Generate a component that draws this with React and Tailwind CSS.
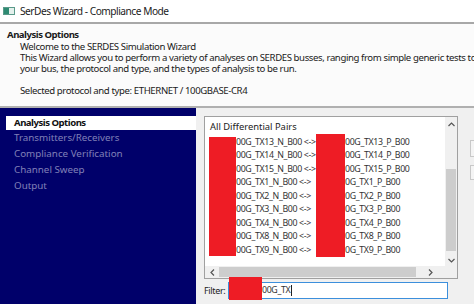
import React from "react";

const rows = [
  ["00G_TX13_N_B00 <->", "00G_TX13_P_B00"],
  ["00G_TX14_N_B00 <->", "00G_TX14_P_B00"],
  ["00G_TX15_N_B00 <->", "00G_TX15_P_B00"],
  ["00G_TX1_N_B00 <->", "0G_TX1_P_B00"],
  ["00G_TX2_N_B00 <->", "0G_TX2_P_B00"],
  ["00G_TX3_N_B00 <->", "0G_TX3_P_B00"],
  ["00G_TX4_N_B00 <->", "0G_TX4_P_B00"],
  ["00G_TX8_N_B00 <->", "0G_TX8_P_B00"],
  ["00G_TX9_N_B00 <->", "0G_TX9_P_B00"],
];

const nav = ["Transmitters/Receivers", "Compliance Verification", "Channel Sweep", "Output"];

export default function App() {
  return (
    <div
      className="w-[474px] h-[304px] overflow-hidden bg-white flex flex-col text-[#1a1a1a]"
      style={{ fontFamily: '"Noto Sans", "Open Sans", sans-serif' }}
    >
      {/* title bar */}
      <div className="h-[22px] flex items-center pl-[3px] gap-[5px] bg-white shrink-0">
        <div className="w-[12px] h-[8px] flex border border-[#5a9a8a]">
          <div className="w-[5px] bg-[#2e8a72]" />
          <div className="flex-1 bg-[#e4f0ec]" />
        </div>
        <span className="text-[10.2px] leading-none text-[#222] tracking-[-0.5px]">SerDes Wizard - Compliance Mode</span>
      </div>
      <div className="h-[2px] bg-[#a8a8a8] shrink-0" />
      {/* header */}
      <div className="h-[82px] bg-[#fbfbfb] flex flex-col pl-[7px] pt-[5px] shrink-0 text-[9.6px] leading-[11px] tracking-[-0.4px]">
        <div className="font-bold text-[9.6px] tracking-[-0.5px]">Analysis Options</div>
        <div className="pl-[13px] pt-[1px]">
          <div>Welcome to the SERDES Simulation Wizard</div>
          <div className="whitespace-nowrap">This Wizard allows you to perform a variety of analyses on SERDES busses, ranging from simple generic tests to</div>
          <div>your bus, the protocol and type, and the types of analysis to be run.</div>
          <div className="pt-[11px]">Selected protocol and type: ETHERNET / 100GBASE-CR4</div>
        </div>
      </div>
      <div className="h-[2px] bg-[#b0b0b0] shrink-0" />
      {/* body */}
      <div className="flex flex-1 min-h-0">
        <div className="w-[196px] bg-[#00006a] flex flex-col pt-[8px] text-[9.8px] shrink-0">
          <div className="ml-[6px] h-[14px] bg-white flex items-center pl-[8px] font-bold text-[9.6px] tracking-[-0.5px] text-[#111]">Analysis Options</div>
          {nav.map((n) => (
            <div key={n} className="h-[16px] flex items-center pl-[14px] text-[#8080b8]">
              {n}
            </div>
          ))}
        </div>
        <div className="flex-1 bg-[#f0f0f0] flex flex-col pl-[8px] pt-[8px] relative overflow-hidden">
          <div className="flex">
            <div className="w-[254px] h-[163px] shrink-0 bg-white border border-[#a0a0a0] flex flex-col relative">
              <div className="flex flex-1 min-h-0">
                <div className="flex-1 flex flex-col pl-[5px] pt-[3px] text-[9.4px] leading-[13.5px] relative">
                  <div className="pb-[2px] text-[#222]">All Differential Pairs</div>
                  {rows.map((r) => (
                    <div key={r[0]} className="flex whitespace-nowrap text-[#333] h-[13.5px] text-[8.8px] tracking-[-0.35px]">
                      <div className="w-[135px] pl-[26px]">{r[0]}</div>
                      <div>{r[1]}</div>
                    </div>
                  ))}
                  <div className="absolute left-[4px] top-[20px] w-[27px] h-[119px] bg-[#ee1c25]" />
                  <div className="absolute left-[111px] top-[17px] w-[29px] h-[123px] bg-[#ee1c25]" />
                </div>
                {/* vertical scrollbar */}
                <div className="w-[12px] bg-[#f0f0f0] flex flex-col items-center">
                  <div className="h-[14px] flex items-center justify-center">
                    <svg width="7" height="5" viewBox="0 0 7 5"><path d="M0.5 4 L3.5 1 L6.5 4" fill="none" stroke="#555" strokeWidth="1.2" /></svg>
                  </div>
                  <div className="h-[38px]" />
                  <div className="w-[10px] h-[82px] bg-[#cdcdcd]" />
                  <div className="flex-1 flex items-end justify-center pb-[3px]">
                    <svg width="7" height="5" viewBox="0 0 7 5"><path d="M0.5 1 L3.5 4 L6.5 1" fill="none" stroke="#555" strokeWidth="1.2" /></svg>
                  </div>
                </div>
              </div>
              {/* horizontal scrollbar */}
              <div className="h-[12px] bg-[#f0f0f0] flex items-center">
                <div className="w-[14px] flex justify-center">
                  <svg width="5" height="7" viewBox="0 0 5 7"><path d="M4 0.5 L1 3.5 L4 6.5" fill="none" stroke="#555" strokeWidth="1.2" /></svg>
                </div>
                <div className="w-[197px] h-[10px] bg-[#cdcdcd]" />
                <div className="flex-1 flex justify-center">
                  <svg width="5" height="7" viewBox="0 0 5 7"><path d="M1 0.5 L4 3.5 L1 6.5" fill="none" stroke="#555" strokeWidth="1.2" /></svg>
                </div>
                <div className="w-[12px]" />
              </div>
            </div>
            <div className="ml-[12px] shrink-0 flex flex-col gap-[8px] pt-[24px]">
              <div className="w-[12px] h-[17px] border border-[#c8c8c8] bg-[#f4f4f4]" />
              <div className="w-[12px] h-[15px] border border-[#c8c8c8] bg-[#f4f4f4]" />
            </div>
          </div>
          <div className="flex items-center mt-[3px] relative">
            <span className="text-[9px] tracking-[-0.35px] text-[#222] w-[24px]">Filter:</span>
            <div className="w-[220px] shrink-0 h-[17px] border border-[#3c8fdc] bg-white flex items-center pl-[33px] text-[8.8px] tracking-[-0.35px] text-[#333]">
              00G_TX<span className="inline-block w-[1px] h-[11px] bg-[#222] ml-[1px]" />
            </div>
            <div className="absolute left-[25px] top-[-5px] w-[33px] h-[23px] bg-[#ee1c25]" />
          </div>
        </div>
      </div>
    </div>
  );
}
